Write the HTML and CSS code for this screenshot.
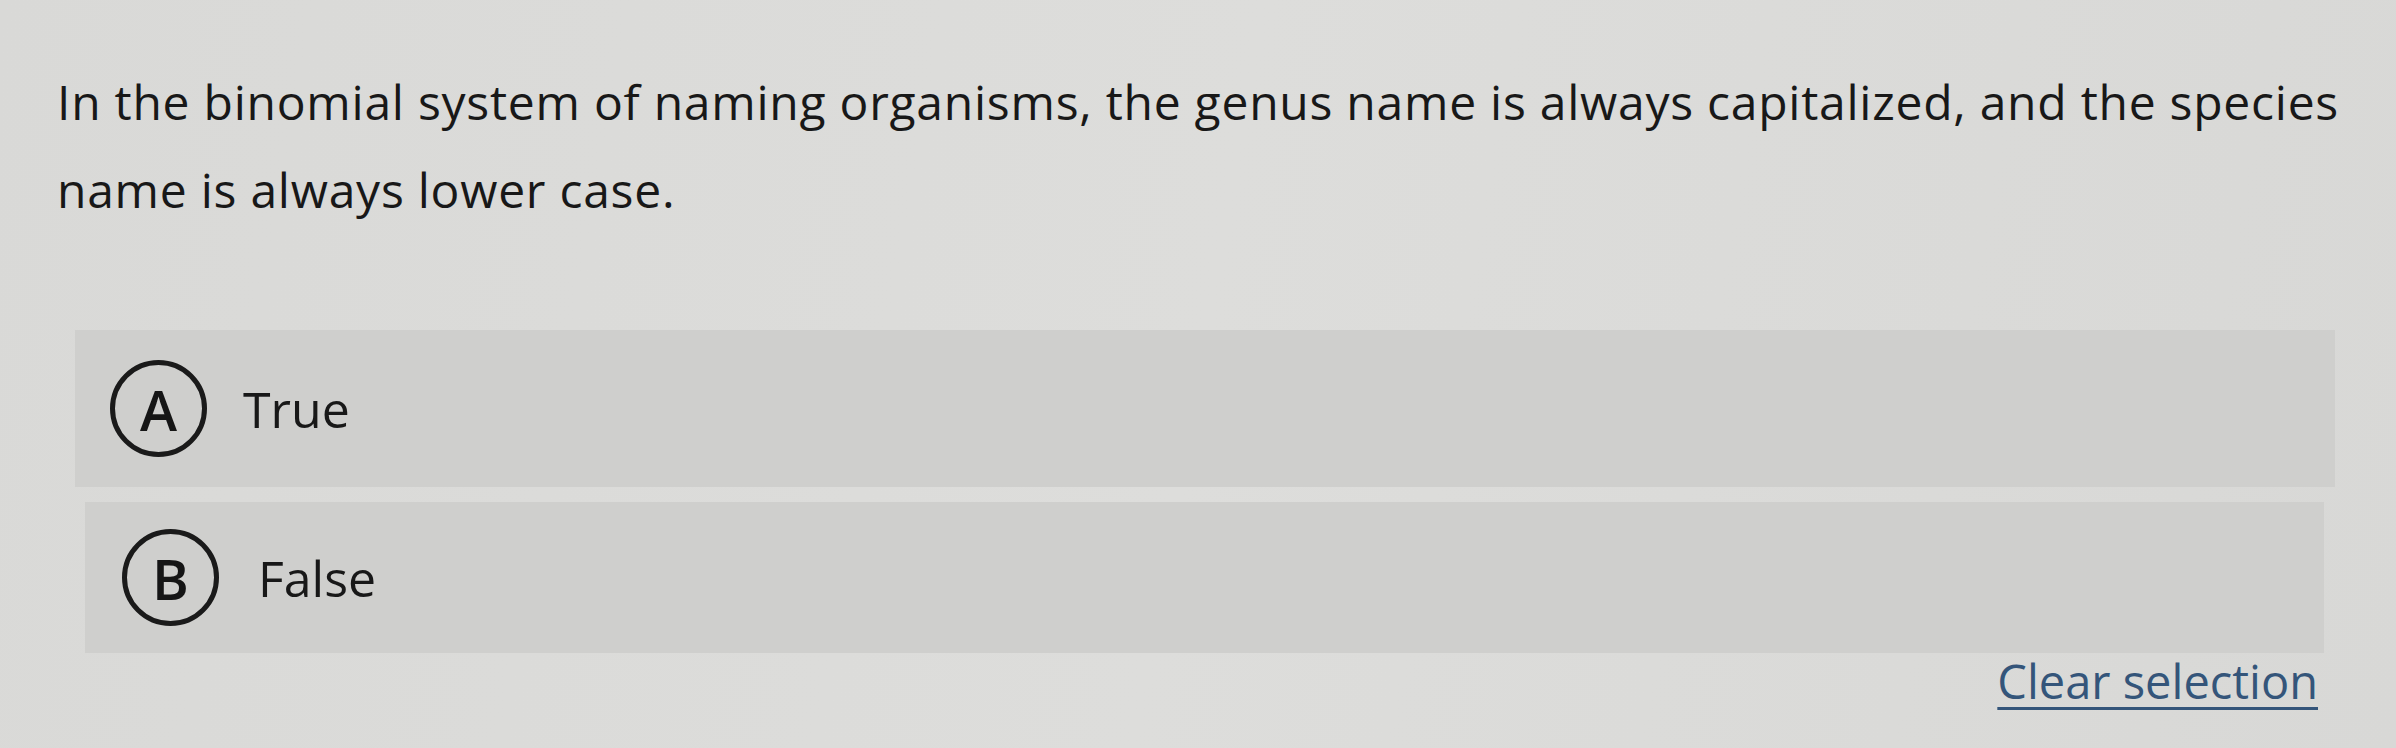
FILE: index.html
```html
<!DOCTYPE html>
<html lang="en">
<head>
<meta charset="utf-8">
<title>Question</title>
<link rel="stylesheet" href="styles.css">
</head>
<body>
<main class="page">
  <p class="question">In the binomial system of naming organisms, the genus name is always capitalized, and the species name is always lower case.</p>
  <div class="options">
    <div class="option">
      <span class="badge">A</span>
      <span class="label">True</span>
    </div>
    <div class="option option-b">
      <span class="badge">B</span>
      <span class="label">False</span>
    </div>
  </div>
  <div class="footer">
    <a class="clear" href="#">Clear selection</a>
  </div>
</main>
</body>
</html>
```

FILE: styles.css
```css
html, body {
  margin: 0;
  padding: 0;
}
body {
  background: linear-gradient(100deg, #d9d9d7 0%, #dddddb 50%, #d8d8d6 100%);
  font-family: "Open Sans", "Liberation Sans", sans-serif;
  color: #181818;
  width: 2396px;
  height: 748px;
  overflow: hidden;
}
.page {
  padding: 58px 40px 0 57px;
}
.question {
  margin: 0;
  font-size: 48px;
  letter-spacing: 0.75px;
  line-height: 88px;
  max-width: 2300px;
}
.options {
  margin-top: 96px;
  margin-left: 18px;
  width: 2260px;
  display: flex;
  flex-direction: column;
  gap: 15px;
}
.option {
  background: #cfcfcd;
  height: 157px;
  display: flex;
  align-items: center;
  padding-left: 35px;
}
.option-b {
  height: 151px;
  margin-left: 10px;
  margin-right: 11px;
  padding-left: 37px;
}
.badge {
  width: 87px;
  height: 87px;
  border: 5px solid #1a1a1a;
  border-radius: 50%;
  display: flex;
  align-items: center;
  justify-content: center;
  font-size: 56px;
  font-weight: 600;
  color: #151515;
  flex: none;
}
.label {
  margin-left: 36px;
  font-size: 50px;
}
.option-b .label {
  margin-left: 39px;
}
.footer {
  display: flex;
  justify-content: flex-end;
  width: 2261px;
}
.clear {
  color: #34557a;
  font-size: 47px;
  line-height: 1.2;
  text-decoration: underline;
  text-decoration-thickness: 3px;
  text-underline-offset: 8px;
}
```
